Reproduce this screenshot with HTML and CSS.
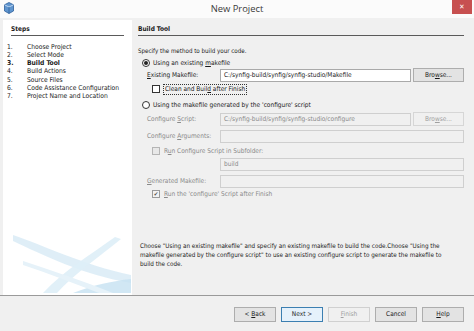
FILE: index.html
```html
<!DOCTYPE html>
<html lang="en">
<head>
  <meta charset="UTF-8">
  <title>New Project</title>
  <link rel="stylesheet" href="styles.css">
</head>
<body>
  <div class="window">
    <div class="titlebar">
      <svg class="app-icon" width="10" height="12" viewBox="0 0 10 12">
        <path d="M5 0.5 L9.5 2.8 L9.5 9 L5 11.5 L0.5 9 L0.5 2.8 Z" fill="#5f95cf" stroke="#2f5f9a" stroke-width="0.8"/>
        <path d="M0.5 2.8 L5 5 L9.5 2.8" fill="none" stroke="#d6e6f7" stroke-width="0.8"/>
        <path d="M5 5 L5 11.5" stroke="#2f5f9a" stroke-width="0.8"/>
      </svg>
      <span class="title">New Project</span>
      <span class="close-btn">&#x2715;</span>
    </div>
    <div class="content">
      <div class="steps">
        <div class="section-title">Steps</div>
        <ol class="step-list">
          <li><span class="num">1.</span>Choose Project</li>
          <li><span class="num">2.</span>Select Mode</li>
          <li class="current"><span class="num">3.</span>Build Tool</li>
          <li><span class="num">4.</span>Build Actions</li>
          <li><span class="num">5.</span>Source Files</li>
          <li><span class="num">6.</span>Code Assistance Configuration</li>
          <li><span class="num">7.</span>Project Name and Location</li>
        </ol>
        <svg class="swoosh" width="128" height="62" viewBox="0 0 128 62">
          <path d="M10 4 C40 14 80 34 128 44 L128 52 C80 44 40 24 10 10 Z" fill="#d7eaf5" opacity="0.8"/>
          <path d="M40 62 C60 40 90 22 112 6 L118 8 C96 26 70 44 54 62 Z" fill="#deeef7" opacity="0.9"/>
          <path d="M70 62 C90 54 110 50 128 48 L128 62 Z" fill="#c6e1f1" opacity="0.8"/>
          <path d="M20 30 C50 40 80 50 110 62 L96 62 C70 52 44 42 20 34 Z" fill="#e6f2f9"/>
        </svg>
      </div>
      <div class="panel">
        <div class="section-title">Build Tool</div>
        <p class="intro">Specify the method to build your code.</p>
        <div class="radio-row row-first">
          <span class="radio checked"></span>
          <span>Using an existing <u>m</u>akefile</span>
        </div>
        <div class="field-row row-existing">
          <span class="field-label"><u>E</u>xisting Makefile:</span>
          <span class="text-input">C:/synfig-build/synfig/synfig-studio/Makefile</span>
          <span class="btn">Bro<u>w</u>se...</span>
        </div>
        <div class="check-row row-clean">
          <span class="checkbox"></span>
          <span class="focused">Clean and Buil<u>d</u> after Finish</span>
        </div>
        <div class="radio-row row-second">
          <span class="radio"></span>
          <span>Using the makefile generated by the 'configure' script</span>
        </div>
        <div class="field-row disabled row-script">
          <span class="field-label">Configure <u>S</u>cript:</span>
          <span class="text-input">C:/synfig-build/synfig/synfig-studio/configure</span>
          <span class="btn">Bro<u>w</u>se...</span>
        </div>
        <div class="field-row disabled row-args">
          <span class="field-label">Configure <u>A</u>rguments:</span>
          <span class="text-input wide"></span>
        </div>
        <div class="check-row disabled row-subfolder">
          <span class="checkbox"></span>
          <span>R<u>u</u>n Configure Script in Subfolder:</span>
        </div>
        <div class="field-row disabled row-build">
          <span class="field-label"></span>
          <span class="text-input wide">build</span>
        </div>
        <div class="field-row disabled row-generated">
          <span class="field-label"><u>G</u>enerated Makefile:</span>
          <span class="text-input wide"></span>
        </div>
        <div class="check-row disabled row-runafter">
          <span class="checkbox checked">&#x2714;</span>
          <span><u>R</u>un the 'configure' Script after Finish</span>
        </div>
        <p class="description">Choose "Using an existing makefile" and specify an existing makefile to build the code.Choose "Using the makefile generated by the configure script" to use an existing configure script to generate the makefile to build the code.</p>
      </div>
    </div>
    <div class="footer">
      <span class="btn action">&lt; <u>B</u>ack</span>
      <span class="btn action default">Next &gt;</span>
      <span class="btn action off"><u>F</u>inish</span>
      <span class="btn action">Cancel</span>
      <span class="btn action"><u>H</u>elp</span>
    </div>
  </div>
</body>
</html>
```

FILE: styles.css
```css
body {
  margin: 0;
  font-family: 'DejaVu Sans Condensed', 'DejaVu Sans', sans-serif;
  font-stretch: condensed;
  background: #f0f0f0;
}
.window {
  width: 474px;
  height: 331px;
  background: #f0f0f0;
  display: flex;
  flex-direction: column;
  overflow: hidden;
  color: #1a1a1a;
  font-size: 6.5px;
}
u {
  text-decoration: underline;
  text-underline-offset: 1px;
}
.titlebar {
  height: 18px;
  background: #fbfbfb;
  display: flex;
  align-items: flex-start;
  position: relative;
}
.app-icon {
  margin: 2px 0 0 4px;
}
.title {
  position: absolute;
  left: 0;
  right: 0;
  top: 3px;
  text-align: center;
  font-family: 'Open Sans', 'Liberation Sans', sans-serif;
  font-stretch: normal;
  font-size: 9.4px;
  color: #3a3a3a;
  line-height: 12px;
}
.close-btn {
  margin-left: auto;
  margin-right: 2px;
  width: 20px;
  height: 14px;
  background: #c75050;
  color: #fff;
  font-size: 7px;
  line-height: 14px;
  text-align: center;
  font-family: 'DejaVu Sans', sans-serif;
}
.content {
  height: 277px;
  display: flex;
  padding: 2px 0 0 3px;
  box-sizing: border-box;
}
.steps {
  width: 129px;
  background: #fff;
  display: flex;
  flex-direction: column;
}
.section-title {
  margin: 5px 0 0 8px;
  line-height: 9px;
  font-weight: bold;
  border-bottom: 1px solid #5a5a5a;
  padding-bottom: 0.5px;
}
.steps .section-title {
  margin-right: 8px;
}
.step-list {
  list-style: none;
  margin: 7px 0 0 0;
  padding: 0 0 0 4px;
  line-height: 8.33px;
  font-size: 6.7px;
}
.step-list .num {
  display: inline-block;
  width: 20px;
}
.step-list .current {
  font-weight: bold;
}
.swoosh {
  margin-top: auto;
  margin-bottom: 2px;
}
.panel {
  flex: 1;
  display: flex;
  flex-direction: column;
  padding: 0 10px 0 0;
}
.panel .section-title {
  margin-left: 6px;
}
.intro {
  margin: 10px 0 0 6px;
  line-height: 9px;
  font-size: 6.2px;
}
.radio-row,
.check-row {
  display: flex;
  align-items: center;
  height: 9px;
  line-height: 9px;
  white-space: nowrap;
}
.radio-row {
  padding-left: 10px;
  gap: 3px;
}
.radio {
  width: 6px;
  height: 6px;
  border: 1px solid #333;
  border-radius: 50%;
  background: #fff;
  display: flex;
  align-items: center;
  justify-content: center;
}
.radio.checked::after {
  content: '';
  width: 4px;
  height: 4px;
  border-radius: 50%;
  background: #222;
}
.row-first { margin-top: 4px; }
.row-second { margin-top: 7px; }
.field-row {
  display: flex;
  align-items: center;
  height: 13px;
  white-space: nowrap;
}
.field-label {
  width: 88px;
  padding-left: 15px;
  box-sizing: border-box;
}
.text-input {
  width: 191px;
  height: 13px;
  box-sizing: border-box;
  border: 1px solid #a9a9a9;
  background: #fff;
  line-height: 11px;
  padding-left: 3px;
}
.text-input.wide {
  width: 244px;
}
.field-row .btn {
  margin-left: 2px;
  width: 51px;
  height: 14px;
}
.btn {
  box-sizing: border-box;
  border: 1px solid #adadad;
  background: #e3e3e3;
  text-align: center;
  line-height: 12px;
  color: #1a1a1a;
}
.row-existing { margin-top: 1px; }
.row-script { margin-top: 3px; }
.row-args { margin-top: 4px; }
.row-build { margin-top: 2px; }
.row-generated { margin-top: 4px; }
.check-row {
  padding-left: 20px;
  gap: 4px;
}
.checkbox {
  width: 6px;
  height: 6px;
  border: 1px solid #333;
  background: #fff;
  font-size: 6px;
  line-height: 6px;
  text-align: center;
  font-family: 'DejaVu Sans', sans-serif;
}
.focused {
  outline: 1px dotted #333;
  padding: 0 1px;
}
.row-clean { margin-top: 3px; }
.row-subfolder { margin-top: 4px; }
.row-runafter { margin-top: 2px; }
.disabled {
  color: #8a8a8a;
}
.disabled .text-input {
  background: #f0f0f0;
  border-color: #cfcfcf;
}
.disabled .btn {
  background: #f0f0f0;
  border-color: #d6d6d6;
  color: #a0a0a0;
}
.disabled .checkbox {
  border-color: #b5b5b5;
  background: #e8e8e8;
}
.row-runafter .checkbox {
  background: #f3f3f3;
  color: #555;
  border-color: #9a9a9a;
}
.description {
  margin: auto 0 27px 8px;
  line-height: 9px;
  width: 312px;
  font-size: 6.3px;
}
.footer {
  height: 36px;
  border-top: 1px solid #9a9a9a;
  box-sizing: border-box;
  display: flex;
  justify-content: flex-end;
  align-items: flex-start;
  gap: 5px;
  padding: 11px 10px 0 0;
}
.btn.action {
  width: 42px;
  height: 15px;
  line-height: 13px;
}
.btn.default {
  border-color: #3c7fb1;
  background: #e5f1fb;
}
.btn.off {
  color: #a0a0a0;
  background: #f0f0f0;
  border-color: #d0d0d0;
}
```
